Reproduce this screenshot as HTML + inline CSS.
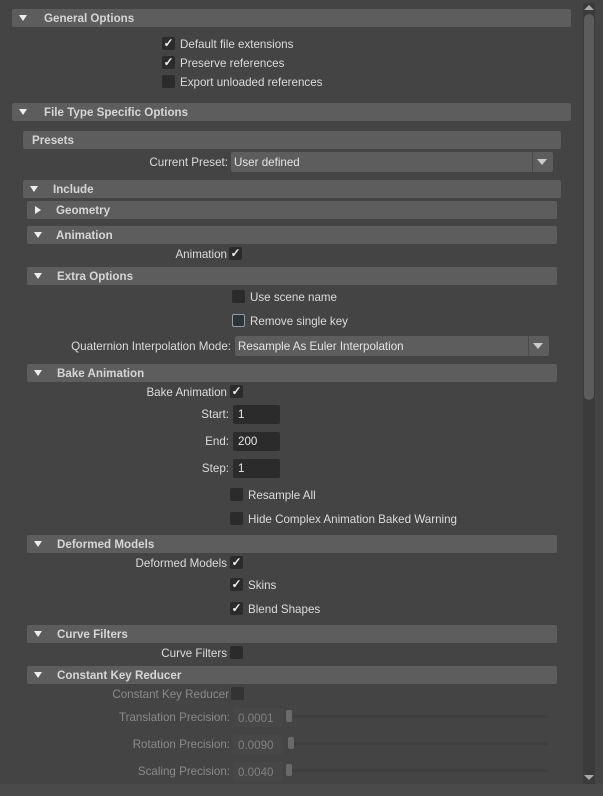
<!DOCTYPE html>
<html><head><style>
*{margin:0;padding:0;box-sizing:border-box}
body{width:603px;height:796px;background:#444;position:relative;overflow:hidden;font-family:"Liberation Sans",sans-serif;font-size:11.6px;color:#dcdcdc}
.a{position:absolute;white-space:nowrap}
.bar{position:absolute;height:18px;background:#5d5d5d;border-radius:2px;font-weight:bold;color:#d6d6d6;line-height:19px}
.tri{position:absolute;top:6px;width:0;height:0;border-left:4px solid transparent;border-right:4px solid transparent;border-top:6px solid #eee}
.rt{position:absolute;top:5px;width:0;height:0;border-top:4px solid transparent;border-bottom:4px solid transparent;border-left:6px solid #eee}
.cb{position:absolute;width:13px;height:13px;background:#2b2b2b;border-radius:2px;color:#eee;font-size:12px;font-weight:bold;line-height:13px;text-align:center}
.lbl{position:absolute;white-space:nowrap;line-height:15px}
.r{text-align:right}
.dd{position:absolute;height:20px;background:#5d5d5d;border-radius:2px;line-height:21px;padding-left:3px;color:#e4e4e4}
.dd .sep{position:absolute;right:20px;top:0;width:1px;height:20px;background:#4a4a4a}
.dd .ar{position:absolute;right:6px;top:7px;border-left:5px solid transparent;border-right:5px solid transparent;border-top:6px solid #ccc}
.fld{position:absolute;height:19px;background:#2b2b2b;border-radius:2px;line-height:20px;padding-left:5px;color:#e6e6e6}
.g{color:#8a8a8a}
.gf{position:absolute;height:19px;background:#474747;border-radius:2px;line-height:21px;padding-left:5px;color:#808080;width:50px}
.trk{position:absolute;height:3px;background:#3f3f3f;width:260px;left:288px}
.hd{position:absolute;width:6px;height:12px;background:#6a6a6a;border-radius:2px}
</style></head><body>
<div class="bar" style="left:12px;top:9px;width:559px"><div class="tri" style="left:7px"></div><span style="position:absolute;left:32px">General Options</span></div>
<div class="cb" style="left:162px;top:37px">✓</div><div class="lbl" style="left:180px;top:37px">Default file extensions</div>
<div class="cb" style="left:162px;top:56px">✓</div><div class="lbl" style="left:180px;top:56px">Preserve references</div>
<div class="cb" style="left:162px;top:75px"></div><div class="lbl" style="left:180px;top:75px">Export unloaded references</div>

<div class="bar" style="left:12px;top:103px;width:559px"><div class="tri" style="left:7px"></div><span style="position:absolute;left:32px">File Type Specific Options</span></div>
<div class="bar" style="left:23px;top:131px;width:538px"><span style="position:absolute;left:9px">Presets</span></div>
<div class="lbl r" style="right:375px;top:155px">Current Preset:</div>
<div class="dd" style="left:231px;top:152px;width:322px">User defined<div class="sep"></div><div class="ar"></div></div>

<div class="bar" style="left:23px;top:180px;width:538px"><div class="tri" style="left:7px"></div><span style="position:absolute;left:30px">Include</span></div>
<div class="bar" style="left:27px;top:201px;width:530px"><div class="rt" style="left:8px"></div><span style="position:absolute;left:29px">Geometry</span></div>
<div class="bar" style="left:27px;top:226px;width:530px"><div class="tri" style="left:7px"></div><span style="position:absolute;left:29px">Animation</span></div>
<div class="lbl r" style="right:376px;top:247px">Animation</div><div class="cb" style="left:229px;top:247px">✓</div>

<div class="bar" style="left:27px;top:267px;width:530px"><div class="tri" style="left:7px"></div><span style="position:absolute;left:30px">Extra Options</span></div>
<div class="cb" style="left:232px;top:290px"></div><div class="lbl" style="left:250px;top:290px">Use scene name</div>
<div class="cb" style="left:232px;top:314px;border:1px solid #8aa0b4;background:#2f3236"></div><div class="lbl" style="left:250px;top:314px">Remove single key</div>
<div class="lbl r" style="right:372px;top:339px">Quaternion Interpolation Mode:</div>
<div class="dd" style="left:235px;top:336px;width:314px">Resample As Euler Interpolation<div class="sep"></div><div class="ar"></div></div>

<div class="bar" style="left:27px;top:364px;width:530px"><div class="tri" style="left:7px"></div><span style="position:absolute;left:30px">Bake Animation</span></div>
<div class="lbl r" style="right:376px;top:385px">Bake Animation</div><div class="cb" style="left:230px;top:385px">✓</div>
<div class="lbl r" style="right:374px;top:407px">Start:</div><div class="fld" style="left:233px;top:405px;width:47px">1</div>
<div class="lbl r" style="right:374px;top:434px">End:</div><div class="fld" style="left:233px;top:432px;width:47px">200</div>
<div class="lbl r" style="right:374px;top:461px">Step:</div><div class="fld" style="left:233px;top:459px;width:47px">1</div>
<div class="cb" style="left:230px;top:488px"></div><div class="lbl" style="left:248px;top:488px">Resample All</div>
<div class="cb" style="left:230px;top:512px"></div><div class="lbl" style="left:248px;top:512px">Hide Complex Animation Baked Warning</div>

<div class="bar" style="left:27px;top:535px;width:530px"><div class="tri" style="left:7px"></div><span style="position:absolute;left:30px">Deformed Models</span></div>
<div class="lbl r" style="right:376px;top:556px">Deformed Models</div><div class="cb" style="left:230px;top:556px">✓</div>
<div class="cb" style="left:230px;top:578px">✓</div><div class="lbl" style="left:248px;top:578px">Skins</div>
<div class="cb" style="left:230px;top:602px">✓</div><div class="lbl" style="left:248px;top:602px">Blend Shapes</div>

<div class="bar" style="left:27px;top:625px;width:530px"><div class="tri" style="left:7px"></div><span style="position:absolute;left:30px">Curve Filters</span></div>
<div class="lbl r" style="right:376px;top:646px">Curve Filters</div><div class="cb" style="left:230px;top:646px"></div>

<div class="bar" style="left:27px;top:666px;width:530px"><div class="tri" style="left:7px"></div><span style="position:absolute;left:30px">Constant Key Reducer</span></div>
<div class="lbl r g" style="right:374px;top:687px">Constant Key Reducer</div><div class="cb" style="left:231px;top:687px;background:#333"></div>
<div class="lbl r g" style="right:373px;top:710px">Translation Precision:</div><div class="gf" style="left:233px;top:708px">0.0001</div><div class="trk" style="top:715px"></div><div class="hd" style="left:286px;top:710px"></div>
<div class="lbl r g" style="right:373px;top:737px">Rotation Precision:</div><div class="gf" style="left:233px;top:735px">0.0090</div><div class="trk" style="top:742px"></div><div class="hd" style="left:288px;top:737px"></div>
<div class="lbl r g" style="right:373px;top:764px">Scaling Precision:</div><div class="gf" style="left:233px;top:762px">0.0040</div><div class="trk" style="top:769px"></div><div class="hd" style="left:286px;top:764px"></div>

<div class="a" style="left:583px;top:3px;width:12px;height:781px;background:#3b3b3b"></div>
<div class="a" style="left:584px;top:14px;width:10px;height:386px;background:#5c5c5c;border-radius:5px"></div>
<div class="a" style="left:584px;top:5px;border-left:5px solid transparent;border-right:5px solid transparent;border-bottom:5px solid #aaa"></div>
<div class="a" style="left:584px;top:775px;border-left:5px solid transparent;border-right:5px solid transparent;border-top:5px solid #aaa"></div>
<div class="a" style="left:0;top:784px;width:603px;height:12px;background:#4a4a4a"></div>
</body></html>
